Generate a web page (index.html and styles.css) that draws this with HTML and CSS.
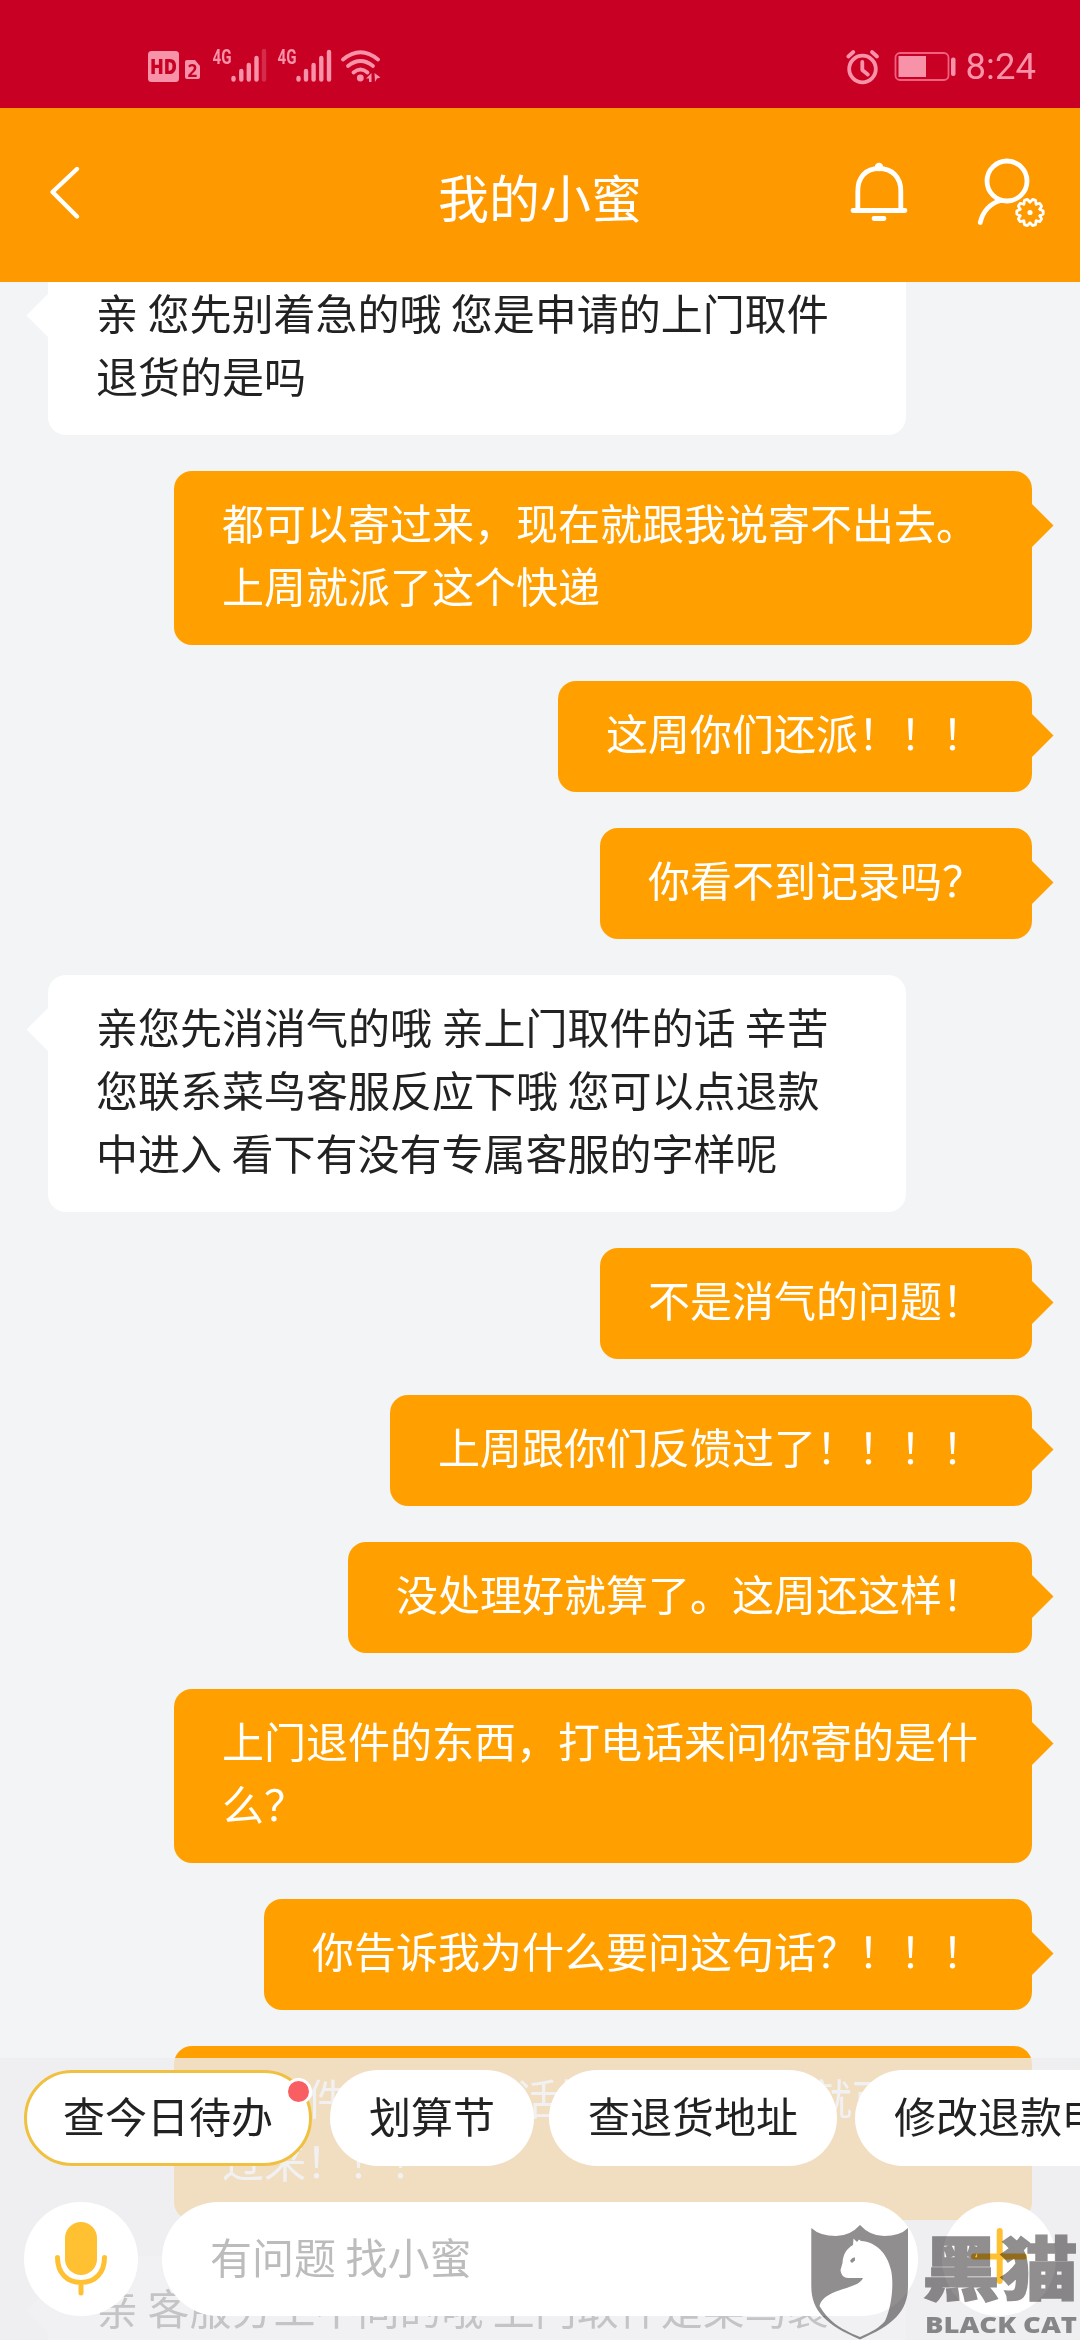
FILE: index.html
```html
<!DOCTYPE html>
<html lang="zh-CN">
<head>
<meta charset="utf-8">
<title>我的小蜜</title>
<link rel="stylesheet" href="styles.css">
</head>
<body>
<div class="phone">
  <div class="status">
    <svg class="status-left" width="240" height="40" viewBox="145 46 240 40">
      <rect class="pink" x="148" y="51" width="31" height="31" rx="3.5"/>
      <text class="hd" x="150" y="74" textLength="27" lengthAdjust="spacingAndGlyphs">HD</text>
      <path class="pink" d="M187 60h8l5 6v11a2 2 0 0 1-2 2h-11a2 2 0 0 1-2-2V62a2 2 0 0 1 2-2z"/>
      <text class="sim" x="187.500" y="76.500">2</text>
      <text class="net" x="212.500" y="64" textLength="19" lengthAdjust="spacingAndGlyphs">4G</text>
      <g class="bars">
        <path d="M233.500 78v1.500M241.300 71v8.500M248.800 65v14.500M256.500 58v21.500"/>
        <path class="faint" d="M264 51v28.500"/>
        <path d="M298.500 78v1.500M306 71v8.500M313.600 65v14.500M321.300 58v21.500M329 52v27.500"/>
      </g>
      <text class="net" x="277.500" y="64" textLength="19" lengthAdjust="spacingAndGlyphs">4G</text>
      <g class="wifi">
        <path d="M343 59.500Q360.500 45 378 59.500"/>
        <path d="M348 66Q360.500 56 373 66"/>
        <path d="M353.500 72.500Q360.500 66.500 367.500 72.500"/>
      </g>
      <circle class="pink" cx="360.300" cy="78" r="3.400"/>
      <path class="pink" d="M371.500 73v9h-2.500v-3.500h-3zM374.500 73l6 4.500-3.500 1-2 3.500z"/>
    </svg>
    <div class="status-right">
      <svg width="112" height="40" viewBox="845 46 112 40">
        <g class="alarm">
          <circle cx="862.500" cy="69" r="13.300"/>
          <path d="M862.300 62v8l5.500 4.500"/>
          <path d="M848.300 56.500l5-4.500M872 52l5 4.500"/>
        </g>
        <rect class="battery" x="895.500" y="53" width="53" height="27" rx="4.500"/>
        <rect class="pink" x="898.500" y="56" width="27.500" height="21"/>
        <rect class="pink" x="951" y="57.500" width="4.500" height="18.500" rx="2"/>
      </svg>
      <span class="clock">8:24</span>
    </div>
  </div>

  <div class="header">
    <svg class="back" width="40" height="60" viewBox="45 162 40 60"><path class="line back-line" d="M77 169L52.500 192 77 216.500"/></svg>
    <div class="title">我的小蜜</div>
    <div class="actions">
      <svg width="64" height="66" viewBox="847 159 64 66">
        <path class="line" d="M857.800 209V191C857.800 177 866 168.500 879 168.500S900.800 177 900.800 191V209"/>
        <path class="line" d="M853 210.500h52M874 218.500h10"/>
        <circle class="dot" cx="879" cy="167" r="4.200"/>
      </svg>
      <svg width="72" height="76" viewBox="976 155 72 76">
        <circle class="line" cx="1007" cy="181" r="20"/>
        <path class="line" d="M980.300 222.500C982.500 212 990 203 1001 200.500"/>
        <defs><path id="tooth" d="M-3.200-9.900L-1.600-13.200H1.600L3.200-9.900"/></defs>
        <g class="gear" transform="translate(1030 212.500)">
          <use href="#tooth" transform="rotate(18)"/>
          <use href="#tooth" transform="rotate(54)"/>
          <use href="#tooth" transform="rotate(90)"/>
          <use href="#tooth" transform="rotate(126)"/>
          <use href="#tooth" transform="rotate(162)"/>
          <use href="#tooth" transform="rotate(198)"/>
          <use href="#tooth" transform="rotate(234)"/>
          <use href="#tooth" transform="rotate(270)"/>
          <use href="#tooth" transform="rotate(306)"/>
          <use href="#tooth" transform="rotate(342)"/>
          <circle class="hub" r="2.600"/>
        </g>
      </svg>
    </div>
  </div>

  <div class="chat">
    <div class="bubble in">亲 您先别着急的哦 您是申请的上门取件退货的是吗</div>
    <div class="bubble out">都可以寄过来，现在就跟我说寄不出去。上周就派了这个快递</div>
    <div class="bubble out">这周你们还派！！！</div>
    <div class="bubble out">你看不到记录吗？</div>
    <div class="bubble in">亲您先消消气的哦 亲上门取件的话 辛苦您联系菜鸟客服反应下哦 您可以点退款中进入 看下有没有专属客服的字样呢</div>
    <div class="bubble out">不是消气的问题！</div>
    <div class="bubble out">上周跟你们反馈过了！！！！</div>
    <div class="bubble out">没处理好就算了。这周还这样！</div>
    <div class="bubble out">上门退件的东西，打电话来问你寄的是什么？</div>
    <div class="bubble out">你告诉我为什么要问这句话？！！！</div>
    <div class="bubble out">上门件都不打电话提前说明一下就可以寄过来！！！</div>
    <div class="bubble in">亲 客服分工不同的哦 上门取件是菜鸟裹裹</div>
  </div>

  <div class="dock">
    <div class="chips">
      <div class="chip active">查今日待办<span class="badge"></span></div>
      <div class="chip sale">划算节</div>
      <div class="chip">查退货地址</div>
      <div class="chip">修改退款申请</div>
    </div>
    <div class="composer">
      <div class="round">
        <svg width="114" height="114" viewBox="0 0 114 114">
          <rect class="mic" x="41" y="20" width="32" height="53" rx="16"/>
          <path class="mic-line" d="M33.500 55.500C33.500 71 43 80.500 57 80.500S80.500 71 80.500 55.500M57 81v10"/>
        </svg>
      </div>
      <div class="field">有问题 找小蜜</div>
      <div class="round">
        <svg width="114" height="114" viewBox="0 0 114 114"><path class="plus" d="M57.700 29v50M32 54.500h50"/></svg>
      </div>
    </div>
  </div>

  <svg class="watermark" width="272" height="120" viewBox="808 2220 272 120">
    <path fill-rule="evenodd" d="M811.300 2228Q820 2236 836 2236 850 2236 860 2225 870 2236 884 2236 900 2236 908 2228V2286C908 2312 893 2325 860 2339.500 827 2325 811.300 2312 811.300 2286zM819.500 2306C828 2320 838 2328 860 2337 872 2332 880 2327 885 2321 892 2306 894 2283 891 2270 887 2253 876 2242 861 2241L859 2239.500 857 2242 853.500 2238.500 853 2245C846 2249 843 2255 842.500 2263L840.500 2270C841 2275 844 2278 848 2278L863 2278C858 2290 824 2288 819.500 2306z"/>
    <path d="M850 2261q2-4 5-3.500v3l-3 2.500z"/>
    <text class="wm-cn" transform="translate(922 2295) scale(1 .9)" textLength="156" lengthAdjust="spacingAndGlyphs">黑猫</text>
    <text class="wm-en" x="925" y="2333" textLength="152" lengthAdjust="spacingAndGlyphs">BLACK CAT</text>
  </svg>
</div>
</body>
</html>
```
FILE: styles.css
```css
* { box-sizing: border-box; }

body {
  margin: 0;
  font-family: "Noto Sans CJK SC", sans-serif;
  font-size: 42px;
  line-height: 63px;
  color: #222;
  text-spacing-trim: space-all;
}

svg { display: block; flex: none; }

.phone {
  position: relative;
  display: flex;
  flex-direction: column;
  width: 1080px;
  height: 2340px;
  overflow: hidden;
  background: #f2f4f6;
}

/* Status bar */
.status {
  display: flex;
  justify-content: space-between;
  flex: none;
  height: 108px;
  padding: 46px 44px 0 145px;
  background: #c80023;
}
.status-right { display: flex; gap: 9px; }
.clock {
  font: 36.5px/40px Roboto, sans-serif;
  color: #f792a8;
  padding-top: 1px;
}
.pink { fill: #f792a8; }
.hd { font: 800 21px "Open Sans", sans-serif; fill: #c80023; }
.sim { font: bold 17px "Open Sans", sans-serif; fill: #c80023; }
.net { font: bold 21px "Roboto", sans-serif; fill: #f792a8; }
.bars { fill: none; stroke: #f792a8; stroke-width: 4.4; stroke-linecap: round; }
.faint { opacity: .3; }
.wifi, .alarm { fill: none; stroke: #f792a8; stroke-width: 3.8; stroke-linecap: round; stroke-linejoin: round; }
.battery { fill: none; stroke: #f0607f; stroke-width: 1.8; }

/* Header */
.header {
  display: grid;
  grid-template-columns: 1fr auto 1fr;
  flex: none;
  z-index: 1;
  height: 174px;
  padding: 0 32px 0 45px;
  background: #ff9900;
  color: #fff;
}
.back { margin-top: 54px; }
.title { font-size: 51px; line-height: 76px; margin-top: 50px; margin-left: -13px; }
.actions { display: flex; justify-content: flex-end; gap: 65px; padding-top: 47px; }
.actions svg:first-child { margin-top: 4px; }
.line { fill: none; stroke: #fff; stroke-width: 4.8; stroke-linecap: round; stroke-linejoin: round; }
.back-line { stroke-width: 4.4; }
.dot { fill: #fff; }
.gear { fill: none; stroke: #fff; stroke-width: 2.8; stroke-linecap: round; stroke-linejoin: round; }
.hub { fill: #fff; stroke: none; }

/* Messages */
.chat {
  display: flex;
  flex-direction: column;
  flex: 1;
  gap: 36px;
  min-height: 0;
  margin-top: -21px;
  padding: 0 48px;
}
.bubble {
  position: relative;
  flex: none;
  max-width: 858px;
  padding: 19px 48px 29px;
  border-radius: 18px;
}
.bubble::after {
  content: "";
  position: absolute;
  top: 33px;
  width: 21.5px;
  height: 43px;
  background: inherit;
}
.in { align-self: flex-start; background: #fff; }
.in::after { right: 100%; clip-path: polygon(100% 0, 0 50%, 100% 100%); }
.out { align-self: flex-end; background: #ffa000; color: #fff; }
.out::after { left: 100%; clip-path: polygon(0 0, 100% 50%, 0 100%); }

/* Bottom dock, floating over the messages */
.dock {
  position: absolute;
  left: 0;
  right: 0;
  bottom: 0;
  height: 282px;
  padding: 12px 24px 0;
  background: rgba(237, 238, 240, .8);
}
.chips { display: flex; gap: 18px; height: 96px; }
.chip {
  position: relative;
  flex: none;
  height: 96px;
  padding: 0 39px;
  border-radius: 48px;
  background: #fff;
  line-height: 90px;
}
.active { padding: 0 36px; border: 3px solid #f0c040; line-height: 84px; }
.sale { width: 204px; margin-right: -3px; }
.badge {
  position: absolute;
  top: 5px;
  right: -3px;
  width: 27px;
  height: 27px;
  border: 3px solid #fff;
  border-radius: 50%;
  background: #f95f62;
}
.composer { display: flex; gap: 24px; margin-top: 36px; }
.round { flex: none; width: 114px; height: 114px; border-radius: 50%; background: #fff; }
.field {
  flex: 1;
  height: 114px;
  padding-left: 48px;
  border-radius: 57px;
  background: #fff;
  line-height: 108px;
  color: #bcbcbc;
}
.mic { fill: #ffc132; }
.mic-line { fill: none; stroke: #ffc132; stroke-width: 5; stroke-linecap: round; }
.plus { fill: none; stroke: #ffc132; stroke-width: 6; stroke-linecap: round; }

.watermark {
  position: absolute;
  right: 0;
  bottom: 0;
  fill: #908e8f;
  mix-blend-mode: multiply;
}
.wm-cn { font: 900 77px "Noto Sans CJK SC", sans-serif; stroke: #908e8f; stroke-width: 1.5; }
.wm-en { font: 800 22px "Open Sans", sans-serif; }
```
